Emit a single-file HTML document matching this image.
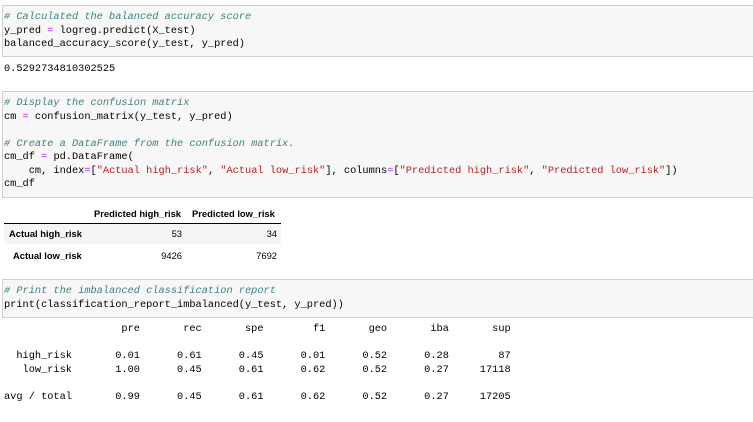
<!DOCTYPE html>
<html><head><meta charset="utf-8"><style>
body{margin:0;width:753px;height:422px;background:#fff;position:relative;overflow:hidden;font-family:"Liberation Mono","DejaVu Sans Mono",monospace;font-size:10.3px;color:#000}
.cell{position:absolute;left:2px;width:760px;background:#f7f7f7;border:1px solid #cfcfcf;box-sizing:border-box}
pre{margin:0;font:inherit;line-height:13.5px;white-space:pre;position:absolute;left:4px}
.c{color:#408080;font-style:italic}
.o{color:#aa22ff}
.s{color:#ba2121}
.t{position:absolute;font-family:"Liberation Sans",Arial,sans-serif;font-size:9.4px;color:#000}
.b{font-weight:bold}
</style></head><body>
<div class="cell" style="top:5px;height:52px"></div>
<pre style="top:11px"><span class="c"># Calculated the balanced accuracy score</span>
y_pred <span class="o">=</span> logreg.predict(X_test)
balanced_accuracy_score(y_test, y_pred)</pre>
<pre style="top:63px">0.5292734810302525</pre>

<div class="cell" style="top:91px;height:107px"></div>
<pre style="top:97px"><span class="c"># Display the confusion matrix</span>
cm <span class="o">=</span> confusion_matrix(y_test, y_pred)

<span class="c"># Create a DataFrame from the confusion matrix.</span>
cm_df <span class="o">=</span> pd.DataFrame(
    cm, index<span class="o">=</span>[<span class="s">"Actual high_risk"</span>, <span class="s">"Actual low_risk"</span>], columns<span class="o">=</span>[<span class="s">"Predicted high_risk"</span>, <span class="s">"Predicted low_risk"</span>])
cm_df</pre>

<div style="position:absolute;left:4px;top:223px;width:277px;height:1px;background:#000"></div>
<div style="position:absolute;left:4px;top:224px;width:277px;height:20px;background:#f5f5f5"></div>
<div class="t b" style="left:94px;top:208px">Predicted high_risk</div>
<div class="t b" style="left:192px;top:208px">Predicted low_risk</div>
<div class="t b" style="left:9px;top:228px">Actual high_risk</div>
<div class="t" style="left:150px;top:228px;width:32px;text-align:right">53</div>
<div class="t" style="left:245px;top:228px;width:32px;text-align:right">34</div>
<div class="t b" style="left:13px;top:250px">Actual low_risk</div>
<div class="t" style="left:150px;top:250px;width:32px;text-align:right">9426</div>
<div class="t" style="left:245px;top:250px;width:32px;text-align:right">7692</div>

<div class="cell" style="top:279px;height:39px"></div>
<pre style="top:285px"><span class="c"># Print the imbalanced classification report</span>
print(classification_report_imbalanced(y_test, y_pred))</pre>

<pre style="top:323px">                   pre       rec       spe        f1       geo       iba       sup

  high_risk       0.01      0.61      0.45      0.01      0.52      0.28        87
   low_risk       1.00      0.45      0.61      0.62      0.52      0.27     17118

avg / total       0.99      0.45      0.61      0.62      0.52      0.27     17205</pre>
</body></html>
